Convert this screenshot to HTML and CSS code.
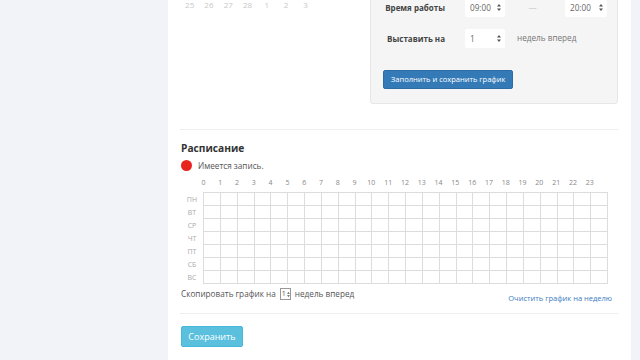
FILE: index.html
```html
<!DOCTYPE html>
<html lang="ru">
<head>
    <meta charset="UTF-8">
    <meta name="viewport" content="width=device-width, initial-scale=1.0">
    <title>Расписание</title>
    <link rel="stylesheet" href="styles.css">
</head>
<body>
    <div class="card">
        <div class="top">
            <div class="calendar">
                <div class="cal-row">
                    <span>25</span><span>26</span><span>27</span><span>28</span><span>1</span><span>2</span><span>3</span>
                </div>
            </div>

            <div class="panel">
                <div class="form-row">
                    <label class="form-label">Время работы</label>
                    <div class="select">09:00 <svg class="arrows" viewBox="0 0 4 7"><path d="M2 0 L4 2.6 L0 2.6 Z M2 7 L4 4.4 L0 4.4 Z"/></svg></div>
                    <span class="dash">—</span>
                    <div class="select wide">20:00 <svg class="arrows" viewBox="0 0 4 7"><path d="M2 0 L4 2.6 L0 2.6 Z M2 7 L4 4.4 L0 4.4 Z"/></svg></div>
                </div>
                <div class="form-row">
                    <label class="form-label">Выставить на</label>
                    <div class="select">1 <svg class="arrows" viewBox="0 0 4 7"><path d="M2 0 L4 2.6 L0 2.6 Z M2 7 L4 4.4 L0 4.4 Z"/></svg></div>
                    <span class="note">недель вперед</span>
                </div>
                <button class="btn btn-primary">Заполнить и сохранить график</button>
            </div>
        </div>

        <hr class="rule">

        <h4 class="title">Расписание</h4>
        <div class="legend">
            <span class="dot"></span>
            <span>Имеется запись.</span>
        </div>

        <div class="hours" id="hours"></div>
        <div class="week">
            <div class="days">
                <span>ПН</span><span>ВТ</span><span>СР</span><span>ЧТ</span><span>ПТ</span><span>СБ</span><span>ВС</span>
            </div>
            <div class="cells" id="cells"></div>
        </div>

        <div class="copy-row">
            <div class="copy">
                Скопировать график на
                <span class="mini-input">1<svg class="arrows" viewBox="0 0 4 7"><path d="M2 0 L4 2.6 L0 2.6 Z M2 7 L4 4.4 L0 4.4 Z"/></svg></span>
                недель вперед
            </div>
            <a href="#" class="clear-link">Очистить график на неделю</a>
        </div>

        <hr class="rule rule-bottom">

        <button class="btn btn-info">Сохранить</button>
    </div>

    <script>
        // hour header and empty schedule cells
        const hours = document.getElementById('hours');
        for (let h = 0; h < 24; h++) {
            const s = document.createElement('span');
            s.textContent = h;
            hours.appendChild(s);
        }
        const cells = document.getElementById('cells');
        for (let i = 0; i < 7 * 24; i++) {
            const c = document.createElement('div');
            c.className = 'cell';
            cells.appendChild(c);
        }
    </script>
</body>
</html>
```

FILE: styles.css
```css
body {
    margin: 0;
    background: #f2f3f8;
    font-family: 'Open Sans', 'DejaVu Sans', sans-serif;
    font-size: 8.2px;
    color: #555;
    overflow: hidden;
}
.card {
    margin-left: 168px;
    width: 463px;
    height: 380px;
    background: #fff;
    padding: 0 13px 0 12px;
    box-sizing: border-box;
}
.top {
    display: flex;
    margin-top: -20px;
}
.calendar {
    width: 190px;
    padding-top: 15px;
}
.cal-row {
    display: flex;
    line-height: 19px;
    font-size: 8px;
    color: #c8c8c8;
}
.cal-row span {
    width: 19.3px;
    text-align: center;
}
.panel {
    flex: 1;
    background: #f5f5f5;
    border: 1px solid #e6e6e6;
    border-radius: 3px;
    padding: 17px 10px 14px 12px;
}
.form-row {
    display: flex;
    align-items: center;
    height: 19px;
    margin-bottom: 12px;
}
.form-label {
    width: 62px;
    padding-right: 2px;
    margin-right: 18px;
    text-align: right;
    white-space: nowrap;
    font-size: 8px;
    font-weight: bold;
    color: #444;
}
.select {
    width: 40px;
    height: 19px;
    box-sizing: border-box;
    padding: 0 4px 0 5px;
    background: #fff;
    border-radius: 2px;
    display: flex;
    align-items: center;
    justify-content: space-between;
    color: #666;
}
.select.wide { width: 42px; }
.arrows {
    width: 4px;
    height: 7px;
    fill: #555;
}
.dash {
    width: 60px;
    text-align: center;
    color: #ccc;
    padding-right: 5px;
    box-sizing: border-box;
}
.note {
    margin-left: 12px;
    margin-top: -2px;
    color: #777;
}
.btn {
    font-family: inherit;
    border-radius: 2px;
    color: #fff;
    cursor: pointer;
}
.btn-primary {
    margin-top: 10px;
    height: 18.5px;
    padding: 0 7px;
    font-size: 7.5px;
    background: #337ab7;
    border: 1px solid #2e6da4;
}
.rule {
    border: 0;
    border-top: 1px solid #eee;
    margin: 25px 0 0;
}
.title {
    margin: 10px 0 0 1px;
    font-size: 10.2px;
    line-height: 16px;
    font-weight: bold;
    color: #333;
}
.legend {
    display: flex;
    align-items: center;
    margin: 4px 0 0 1px;
    height: 11px;
}
.dot {
    width: 11px;
    height: 11px;
    border-radius: 50%;
    background: #e8241e;
    margin-right: 6px;
}
.hours {
    display: grid;
    grid-template-columns: repeat(24, 16.8px);
    margin: 7px 0 0 15px;
    font-size: 7px;
    line-height: 10px;
    color: #888;
}
.hours span { text-align: center; }
.week {
    display: flex;
    margin: 4px 0 0 1px;
}
.days {
    width: 22px;
    padding-top: 1px;
    display: grid;
    grid-auto-rows: 13.1px;
    font-size: 7px;
    color: #aaa;
}
.days span {
    text-align: center;
    line-height: 13.1px;
}
.cells {
    width: 404px;
    display: grid;
    grid-template-columns: repeat(24, 1fr);
    grid-auto-rows: 13.1px;
    border-top: 1px solid #dcdcdc;
    border-left: 1px solid #dcdcdc;
}
.cell {
    border-right: 1px solid #dcdcdc;
    border-bottom: 1px solid #dcdcdc;
}
.copy-row {
    display: flex;
    justify-content: space-between;
    align-items: flex-start;
    margin: 3px 0 0 1px;
    height: 16px;
}
.copy {
    display: flex;
    align-items: center;
    line-height: 14px;
    color: #555;
}
.mini-input {
    display: inline-flex;
    align-items: center;
    gap: 1px;
    height: 12px;
    width: 11px;
    box-sizing: border-box;
    border: 1px solid #999;
    margin: 0 4px;
    padding-left: 1px;
    font-size: 7px;
}
.mini-input .arrows { width: 3px; height: 5px; }
.clear-link {
    padding-top: 4px;
    margin-right: 6px;
    line-height: 14px;
    font-size: 7.5px;
    color: #3b7dbf;
    text-decoration: none;
}
.rule-bottom { margin-top: 10px; }
.btn-info {
    margin: 12px 0 0 1px;
    height: 20.5px;
    width: 62px;
    font-size: 9px;
    background: #5bc0de;
    border: 1px solid #46b8da;
}
```
